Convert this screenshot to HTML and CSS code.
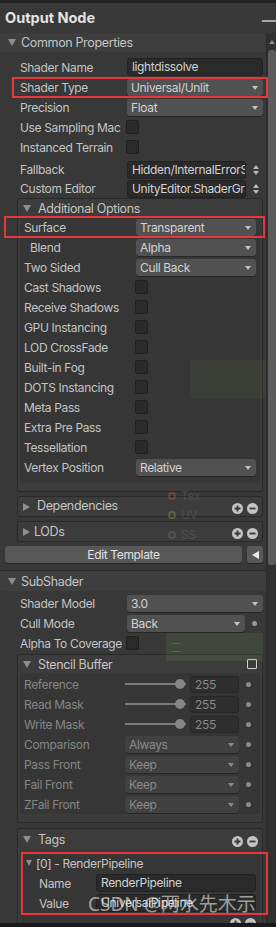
FILE: index.html
```html
<!DOCTYPE html>
<html lang="en">

<head>
    <meta charset="UTF-8">
    <title>Output Node</title>
    <link rel="stylesheet" href="styles.css">
</head>

<body>
    <div class="topbar"></div>
    <div class="screen">
        <div class="main">
            <div class="title">Output Node <span class="minimize"></span></div>

            <div class="section-head"><span class="tri down"></span>Common Properties</div>
            <div class="common">
                <div class="row"><span class="label">Shader Name</span><span class="field text">lightdissolve</span></div>
                <div class="row marked wide"><span class="label">Shader Type</span><span class="field drop">Universal/Unlit</span></div>
                <div class="row"><span class="label">Precision</span><span class="field drop">Float</span></div>
                <div class="row"><span class="label">Use Sampling Mac</span><span class="check"></span></div>
                <div class="row"><span class="label">Instanced Terrain</span><span class="check"></span></div>
                <div class="row tight gap"><span class="label">Fallback</span><span class="field text short">Hidden/InternalErrorShader</span><span class="updown"></span></div>
                <div class="row tight"><span class="label">Custom Editor</span><span class="field text short">UnityEditor.ShaderGraph</span><span class="updown"></span></div>
            </div>

            <div class="box options">
                <div class="box-head"><span class="tri down"></span>Additional Options</div>
                <div class="inner">
                    <div class="row marked surface"><span class="label">Surface</span><span class="field drop">Transparent</span></div>
                    <div class="row"><span class="label sub">Blend</span><span class="field drop">Alpha</span></div>
                    <div class="row"><span class="label">Two Sided</span><span class="field drop">Cull Back</span></div>
                    <div class="row"><span class="label">Cast Shadows</span><span class="check"></span></div>
                    <div class="row"><span class="label">Receive Shadows</span><span class="check"></span></div>
                    <div class="row"><span class="label">GPU Instancing</span><span class="check"></span></div>
                    <div class="row"><span class="label">LOD CrossFade</span><span class="check"></span></div>
                    <div class="row"><span class="label">Built-in Fog</span><span class="check"></span></div>
                    <div class="row"><span class="label">DOTS Instancing</span><span class="check"></span></div>
                    <div class="row"><span class="label">Meta Pass</span><span class="check"></span></div>
                    <div class="row"><span class="label">Extra Pre Pass</span><span class="check"></span></div>
                    <div class="row"><span class="label">Tessellation</span><span class="check"></span></div>
                    <div class="row"><span class="label">Vertex Position</span><span class="field drop">Relative</span></div>
                </div>
            </div>

            <div class="box fold">
                <span class="tri right"></span><span class="fold-name">Dependencies</span>
                <span class="pm">
                    <svg width="11" height="11" viewBox="0 0 11 11"><circle cx="5.5" cy="5.5" r="5.5" fill="#c4c4c4"/><path d="M5.5 2.5v6M2.5 5.5h6" stroke="#383838" stroke-width="1.8"/></svg>
                    <svg width="11" height="11" viewBox="0 0 11 11"><circle cx="5.5" cy="5.5" r="5.5" fill="#c4c4c4"/><path d="M2.5 5.5h6" stroke="#383838" stroke-width="1.8"/></svg>
                </span>
            </div>
            <div class="box fold lods">
                <span class="tri right"></span><span class="fold-name">LODs</span>
                <span class="pm">
                    <svg width="11" height="11" viewBox="0 0 11 11"><circle cx="5.5" cy="5.5" r="5.5" fill="#c4c4c4"/><path d="M5.5 2.5v6M2.5 5.5h6" stroke="#383838" stroke-width="1.8"/></svg>
                    <svg width="11" height="11" viewBox="0 0 11 11"><circle cx="5.5" cy="5.5" r="5.5" fill="#c4c4c4"/><path d="M2.5 5.5h6" stroke="#383838" stroke-width="1.8"/></svg>
                </span>
            </div>

            <div class="template">
                <button class="btn edit">Edit Template</button>
                <button class="btn arrow"><span class="tri left"></span></button>
            </div>

            <div class="section-head sub-head"><span class="tri down"></span>SubShader</div>
            <div class="common subshader">
                <div class="row"><span class="label">Shader Model</span><span class="field drop">3.0</span></div>
                <div class="row"><span class="label">Cull Mode</span><span class="field drop short">Back</span><span class="dot"></span></div>
                <div class="row"><span class="label clip">Alpha To Coverage</span><span class="check"></span></div>
            </div>

            <div class="box stencil">
                <div class="box-head"><span class="tri down"></span>Stencil Buffer<span class="head-check"></span></div>
                <div class="inner off">
                    <div class="row"><span class="label">Reference</span><span class="slider"><span class="knob"></span></span><span class="field num">255</span><span class="dot"></span></div>
                    <div class="row"><span class="label">Read Mask</span><span class="slider"><span class="knob"></span></span><span class="field num">255</span><span class="dot"></span></div>
                    <div class="row"><span class="label">Write Mask</span><span class="slider"><span class="knob"></span></span><span class="field num">255</span><span class="dot"></span></div>
                    <div class="row"><span class="label">Comparison</span><span class="field drop">Always</span><span class="dot"></span></div>
                    <div class="row"><span class="label">Pass Front</span><span class="field drop">Keep</span><span class="dot"></span></div>
                    <div class="row"><span class="label">Fail Front</span><span class="field drop">Keep</span><span class="dot"></span></div>
                    <div class="row"><span class="label">ZFail Front</span><span class="field drop">Keep</span><span class="dot"></span></div>
                </div>
            </div>

            <div class="box tags">
                <div class="box-head"><span class="tri down"></span>Tags
                    <span class="pm">
                        <svg width="11" height="11" viewBox="0 0 11 11"><circle cx="5.5" cy="5.5" r="5.5" fill="#c4c4c4"/><path d="M5.5 2.5v6M2.5 5.5h6" stroke="#383838" stroke-width="1.8"/></svg>
                        <svg width="11" height="11" viewBox="0 0 11 11"><circle cx="5.5" cy="5.5" r="5.5" fill="#c4c4c4"/><path d="M2.5 5.5h6" stroke="#383838" stroke-width="1.8"/></svg>
                    </span>
                </div>
                <div class="inner">
                    <div class="tag-item">
                        <div class="row item-head"><span class="tri down small"></span>[0] - RenderPipeline</div>
                        <div class="row"><span class="label">Name</span><span class="field text">RenderPipeline</span></div>
                        <div class="row"><span class="label">Value</span><span class="field text">UniversalPipeline</span></div>
                    </div>
                    <div class="tag-foot">
                        <span class="pm">
                            <svg width="11" height="11" viewBox="0 0 11 11"><circle cx="5.5" cy="5.5" r="5.5" fill="#c4c4c4"/><path d="M5.5 2.5v6M2.5 5.5h6" stroke="#383838" stroke-width="1.8"/></svg>
                            <svg width="11" height="11" viewBox="0 0 11 11"><circle cx="5.5" cy="5.5" r="5.5" fill="#c4c4c4"/><path d="M2.5 5.5h6" stroke="#383838" stroke-width="1.8"/></svg>
                        </span>
                    </div>
                </div>
            </div>
        </div>

        <div class="scrollbar">
            <span class="scroll-up"></span>
            <span class="thumb"></span>
        </div>

        <!-- graph nodes showing faintly through the inspector -->
        <div class="ghost node-a"></div>
        <div class="ghost port" style="top: 485px;"><span class="pin orange"></span>Tex</div>
        <div class="ghost port" style="top: 504px;"><span class="pin yellow"></span>UV</div>
        <div class="ghost port" style="top: 524px;"><span class="pin"></span>SS</div>
        <div class="ghost node-b"><span class="bars"></span></div>

        <div class="watermark">CSDN @两水先木示</div>
    </div>
    <div class="bottombar"></div>
</body>

</html>
```

FILE: styles.css
```css
body {
    margin: 0;
    width: 276px;
    height: 927px;
    overflow: hidden;
    background-color: #383838;
    font-family: Inter, "Noto Sans", sans-serif;
    font-size: 12px;
    letter-spacing: -0.35px;
    color: #c4c4c4;
}

.topbar {
    height: 3px;
    background-color: #232323;
}

.bottombar {
    height: 4px;
    background-color: #191919;
}

.screen {
    position: relative;
    display: flex;
    height: 920px;
    overflow: hidden;
}

.main {
    width: 266px;
    flex: none;
}

.title {
    position: relative;
    height: 30px;
    line-height: 29px;
    padding-left: 5px;
    font-size: 14.5px;
    font-weight: 700;
    letter-spacing: 0;
    color: #e4e4e4;
}

.minimize {
    position: absolute;
    left: 262px;
    top: 17px;
    width: 14px;
    height: 2px;
    background-color: #a8a8a8;
}

/* triangles */
.tri {
    display: inline-block;
    width: 0;
    height: 0;
    flex: none;
}

.tri.down {
    border-left: 4px solid transparent;
    border-right: 4px solid transparent;
    border-top: 7px solid #8e8e8e;
}

.tri.down.small {
    border-left-width: 3px;
    border-right-width: 3px;
    border-top-width: 6px;
}

.tri.right {
    border-top: 4px solid transparent;
    border-bottom: 4px solid transparent;
    border-left: 7px solid #8e8e8e;
}

.tri.left {
    border-top: 4px solid transparent;
    border-bottom: 4px solid transparent;
    border-right: 7px solid #e8e8e8;
}

.section-head {
    display: flex;
    align-items: center;
    height: 19px;
    padding-left: 8px;
    gap: 5px;
    background-color: #3e3e3e;
    font-size: 12.5px;
}

.sub-head {
    margin-top: 7px;
    border-top: 1px solid #2c2c2c;
    height: 20px;
}

/* rows */
.row {
    position: relative;
    display: flex;
    align-items: center;
    height: 20px;
}

.row.tight {
    height: 19px;
}

.row.gap {
    margin-top: 3px;
}

.label {
    flex: none;
    white-space: nowrap;
    overflow: hidden;
}

.common {
    margin-top: 5px;
    padding-left: 20px;
}

.common .label {
    width: 107px;
}

.common .label.clip {
    width: 105px;
    margin-right: 2px;
}

.subshader {
    margin-top: 2px;
}

.field {
    box-sizing: border-box;
    flex: none;
    white-space: nowrap;
    overflow: hidden;
    padding-left: 4px;
    border-radius: 3px;
    color: #d2d2d2;
}

.field.text {
    width: 136px;
    height: 18px;
    line-height: 16px;
    background-color: #2a2a2a;
    border: 1px solid #212121;
}

.field.short {
    width: 119px;
}

.field.drop {
    position: relative;
    width: 136px;
    height: 17px;
    line-height: 17px;
    background-color: #515151;
    box-shadow: 0 1px 0 #262626;
}

.field.drop.short {
    width: 118px;
}

.field.drop::after {
    content: "";
    position: absolute;
    right: 5px;
    top: 7px;
    border-left: 3.5px solid transparent;
    border-right: 3.5px solid transparent;
    border-top: 4px solid #c4c4c4;
}

.check {
    box-sizing: border-box;
    width: 13px;
    height: 14px;
    margin-left: -1px;
    background-color: #2a2a2a;
    border: 1px solid #1f1f1f;
    border-radius: 2px;
}

.updown {
    position: relative;
    width: 17px;
    height: 14px;
}

.updown::before,
.updown::after {
    content: "";
    position: absolute;
    left: 7px;
    border-left: 3px solid transparent;
    border-right: 3px solid transparent;
}

.updown::before {
    top: 2px;
    border-bottom: 4px solid #b8b8b8;
}

.updown::after {
    top: 8px;
    border-top: 4px solid #b8b8b8;
}

.dot {
    width: 5px;
    height: 5px;
    margin-left: 7px;
    border-radius: 50%;
    background-color: #9a9a9a;
}

/* red annotation frames */
.marked::after {
    content: "";
    position: absolute;
    top: 0;
    bottom: -1px;
    border: 2px solid #e8363a;
    pointer-events: none;
    z-index: 2;
}

.marked.wide::after {
    left: -8px;
    right: -2px;
}

.marked.surface::after {
    left: -20px;
    right: -5px;
    top: -1px;
    bottom: -1px;
}

/* boxes */
.box {
    box-sizing: border-box;
    margin-left: 17px;
    width: 246px;
    background-color: #3c3c3c;
    border: 1px solid #292929;
    border-radius: 3px;
}

.box-head {
    display: flex;
    align-items: center;
    height: 18px;
    padding-left: 5px;
    gap: 7px;
    font-size: 12.5px;
}

.inner {
    margin: 0 2px;
    background-color: #363636;
}

.options .inner {
    padding: 0 0 6px 4px;
}

.options .label {
    width: 112px;
}

.options .label.sub {
    padding-left: 6px;
    width: 106px;
}

.options .field.drop {
    width: 120px;
}

.options {
    padding-bottom: 8px;
}

.fold {
    display: flex;
    align-items: center;
    height: 21px;
    margin-top: 4px;
    padding-left: 5px;
    font-size: 12.5px;
}

.fold-name {
    margin-left: 7px;
    margin-top: -3px;
}

.lods .fold-name {
    margin-left: 4px;
    margin-top: -1px;
}

.pm {
    display: flex;
    gap: 4px;
    margin-left: auto;
    margin-right: 4px;
    margin-top: 3px;
}

.pm svg {
    display: block;
}

.template {
    display: flex;
    gap: 5px;
    margin: 4px 0 0 5px;
}

.btn {
    height: 17px;
    padding: 0;
    border: none;
    border-radius: 3px;
    background-color: #585858;
    box-shadow: 0 1px 0 #242424;
    color: #e2e2e2;
    font-family: inherit;
    font-size: 12px;
    letter-spacing: -0.35px;
}

.btn.edit {
    width: 237px;
}

.btn.arrow {
    width: 16px;
    display: flex;
    align-items: center;
    justify-content: center;
}

/* stencil */
.stencil {
    margin-top: 1px;
    padding-bottom: 8px;
}

.head-check {
    box-sizing: border-box;
    width: 10px;
    height: 10px;
    margin-left: auto;
    margin-right: 5px;
    border: 1px solid #d0d0d0;
    border-radius: 1px;
}

.stencil .inner {
    padding: 1px 0 0 4px;
    height: 140px;
}

.off {
    color: #858585;
}

.stencil .label {
    width: 101px;
}

.slider {
    position: relative;
    width: 61px;
    height: 2px;
    background-color: #7a7a7a;
}

.knob {
    position: absolute;
    right: 1px;
    top: -4px;
    width: 10px;
    height: 10px;
    border-radius: 50%;
    background-color: #858585;
}

.field.num {
    width: 49px;
    height: 17px;
    line-height: 15px;
    margin-left: 4px;
    background-color: #2e2e2e;
    border: 1px solid #272727;
    color: #8a8a8a;
}

.off .field.drop {
    width: 114px;
    background-color: #414141;
    color: #8a8a8a;
}

.off .field.drop::after {
    border-top-color: #8a8a8a;
}

.off .dot {
    background-color: #8a8a8a;
}

/* tags */
.tags {
    margin-top: 5px;
}

.tags .box-head {
    height: 20px;
}

.tags .box-head .pm {
    margin-top: 5px;
}

.tags .inner {
    padding-top: 4px;
}

.tag-item {
    position: relative;
    margin-left: 1px;
}

.tag-item::after {
    content: "";
    position: absolute;
    left: 0;
    right: -8px;
    top: -1px;
    bottom: -2px;
    border: 2px solid #e8363a;
    z-index: 2;
}

.item-head {
    gap: 4px;
    padding-left: 5px;
}

.tag-item .label {
    width: 57px;
    padding-left: 18px;
}

.tag-item .field.text {
    width: 160px;
}

.tag-foot {
    display: flex;
    height: 16px;
    padding-top: 2px;
}

/* scrollbar */
.scrollbar {
    position: relative;
    flex: 1;
    margin-top: 30px;
    background-color: #303030;
    border-left: 1px solid #2a2a2a;
}

.scroll-up {
    position: absolute;
    left: 2px;
    top: 7px;
    border-left: 3px solid transparent;
    border-right: 3px solid transparent;
    border-bottom: 4px solid #8a8a8a;
}

.thumb {
    position: absolute;
    left: 1px;
    right: 0;
    top: 17px;
    height: 515px;
    border-radius: 3px;
    background-color: #5c5c5c;
}

/* faint graph behind the panel */
.ghost {
    position: absolute;
    pointer-events: none;
}

.node-a {
    left: 190px;
    top: 357px;
    width: 76px;
    height: 38px;
    background-color: rgba(110, 140, 70, 0.1);
}

.port {
    left: 168px;
    display: flex;
    align-items: center;
    gap: 5px;
    font-size: 12px;
    color: rgba(200, 200, 200, 0.16);
}

.pin {
    box-sizing: border-box;
    width: 8px;
    height: 8px;
    border-radius: 50%;
    border: 2px solid rgba(160, 160, 160, 0.2);
}

.pin.orange {
    border-color: rgba(220, 140, 60, 0.25);
}

.pin.yellow {
    border-color: rgba(210, 210, 80, 0.25);
}

.node-b {
    left: 166px;
    top: 630px;
    width: 97px;
    height: 28px;
    background-color: rgba(110, 150, 70, 0.16);
}

.bars {
    position: absolute;
    left: 6px;
    top: 10px;
    width: 8px;
    height: 7px;
    border-top: 1px solid rgba(200, 200, 200, 0.2);
    border-bottom: 1px solid rgba(200, 200, 200, 0.2);
}

.watermark {
    position: absolute;
    left: 88px;
    top: 886px;
    font-family: "Noto Sans", "Noto Sans CJK SC", sans-serif;
    font-size: 19px;
    letter-spacing: 0;
    color: rgba(236, 236, 236, 0.6);
    white-space: nowrap;
    z-index: 3;
}
```
